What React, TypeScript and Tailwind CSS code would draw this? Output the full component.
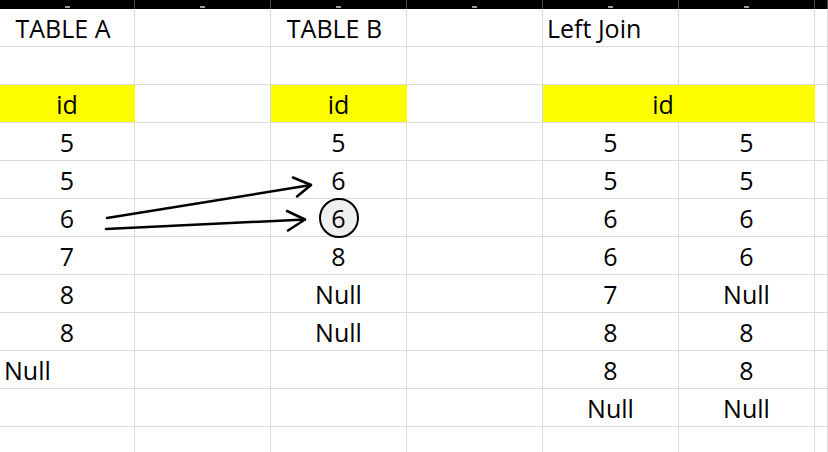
import React from "react";

type CellDef = {
  text?: string;
  w: number;
  align?: "center" | "left";
  yellow?: boolean;
  circled?: boolean;
  pr?: string;
};

const W = [135, 136, 136, 136, 136, 136, 13];

function Cell({ c }: { c: CellDef }) {
  const base =
    "relative shrink-0 h-full border-r border-b flex items-center pt-[2px] leading-[35px]";
  const color = c.yellow
    ? "bg-[#ffff00] border-r-[#ffff00] border-b-[#dadada]"
    : "border-[#dadada]";
  const al = c.align === "left" ? "justify-start pl-[4px]" : "justify-center";
  return (
    <div className={`${base} ${color} ${al} ${c.pr || ""}`} style={{ width: c.w }}>
      {c.circled && (
        <span className="absolute left-1/2 top-1/2 -translate-x-1/2 -translate-y-1/2 w-[40px] h-[40px] rounded-full border-2 border-black bg-[#efefef]" />
      )}
      {c.text && <span className="relative whitespace-nowrap">{c.text}</span>}
    </div>
  );
}

function row(vals: (string | undefined)[], opts: Partial<Record<number, Partial<CellDef>>> = {}): CellDef[] {
  return W.map((w, i) => ({ w, text: vals[i], ...(opts[i] || {}) }));
}

const rows: CellDef[][] = [
  row([undefined, undefined, undefined, undefined, "Left Join"], {
    0: { text: "TABLE A", pr: "pr-[8px]" },
    2: { text: "TABLE B", pr: "pr-[8px]" },
    4: { align: "left" },
  }),
  row([]),
  [
    { w: 135, text: "id", yellow: true },
    { w: 136 },
    { w: 136, text: "id", yellow: true },
    { w: 136 },
    { w: 272, text: "id", yellow: true, pr: "pr-[31px]" },
    { w: 13 },
  ],
  row(["5", undefined, "5", undefined, "5", "5"]),
  row(["5", undefined, "6", undefined, "5", "5"]),
  row(["6", undefined, "6", undefined, "6", "6"], { 2: { circled: true } }),
  row(["7", undefined, "8", undefined, "6", "6"]),
  row(["8", undefined, "Null", undefined, "7", "Null"]),
  row(["8", undefined, "Null", undefined, "8", "8"]),
  row(["Null", undefined, undefined, undefined, "8", "8"], { 0: { align: "left" } }),
  row([undefined, undefined, undefined, undefined, "Null", "Null"]),
  row([]),
];

export default function App() {
  return (
    <div className="relative w-[828px] h-[452px] overflow-hidden bg-white text-black text-[25px] font-['Open_Sans',sans-serif]">
      <div className="flex h-[9px] bg-black overflow-hidden">
        {W.map((w, i) => (
          <div
            key={i}
            className="relative shrink-0 h-full border-r border-[#4a4a4a] flex justify-center items-end"
            style={{ width: w }}
          >
            {i < 6 && <span className="w-[5px] h-[2px] mb-[1px] bg-[#9a9a9a]" />}
          </div>
        ))}
      </div>
      {rows.map((r, ri) => (
        <div key={ri} className="flex h-[38px]">
          {r.map((c, ci) => (
            <Cell key={ci} c={c} />
          ))}
        </div>
      ))}
      <svg
        className="absolute left-0 top-0 pointer-events-none"
        width={828}
        height={452}
        viewBox="0 0 828 452"
        fill="none"
        stroke="black"
        strokeWidth={2.5}
        strokeLinecap="round"
        strokeLinejoin="round"
      >
        <path d="M107 218 L311 185" />
        <path d="M293 177.5 L311 185 L297 196.5" />
        <path d="M106 229 L305 219.5" />
        <path d="M287 211 L305 219.5 L288 230.5" />
      </svg>
    </div>
  );
}
